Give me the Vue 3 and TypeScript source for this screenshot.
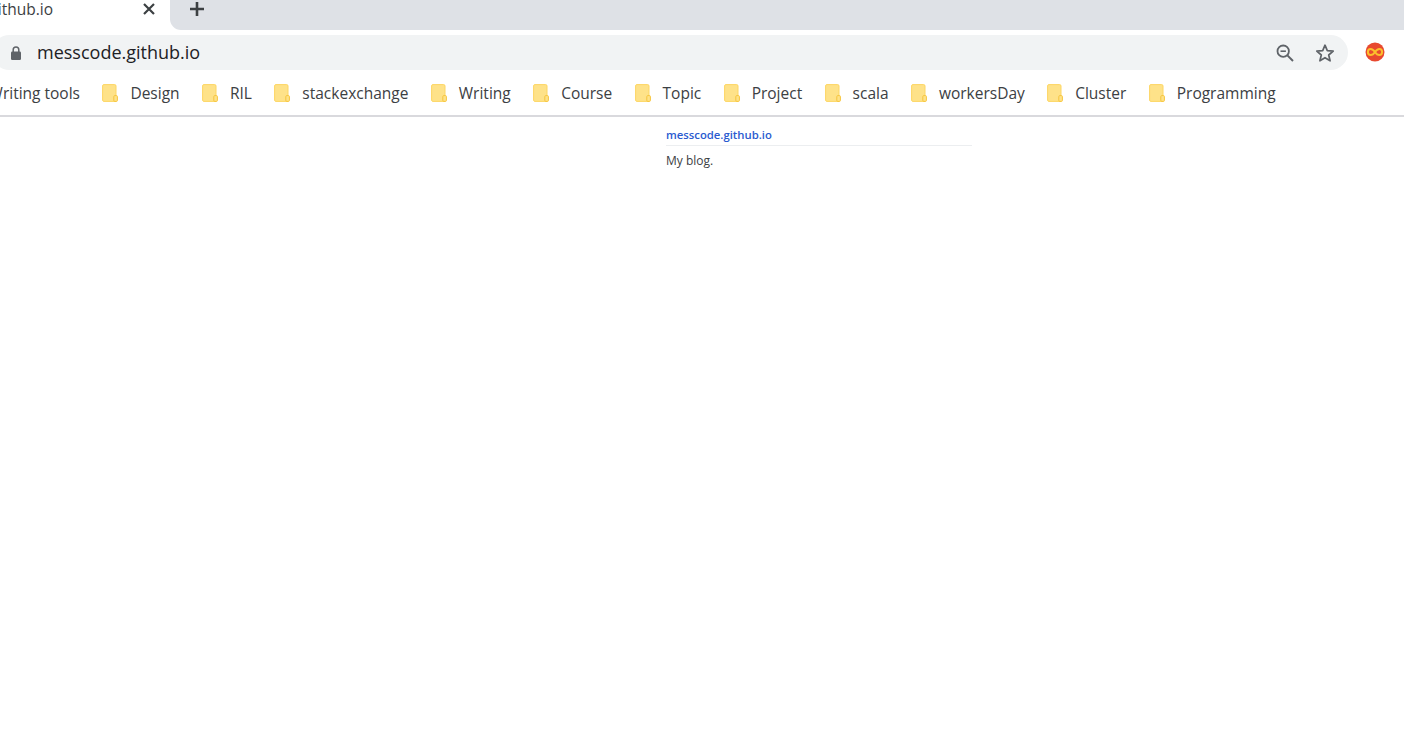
<script setup lang="ts">
const bookmarks: string[] = [
  'Design',
  'RIL',
  'stackexchange',
  'Writing',
  'Course',
  'Topic',
  'Project',
  'scala',
  'workersDay',
  'Cluster',
  'Programming',
]
</script>

<template>
  <div class="browser">
    <div class="tabstrip">
      <div class="tab">
        <div class="tab-title"><span>messcode.github.io</span></div>
        <svg class="tab-close" viewBox="0 0 12 12" width="12" height="12">
          <path d="M1 1 L11 11 M11 1 L1 11" stroke="#3c4043" stroke-width="2.2" fill="none" />
        </svg>
      </div>
      <div class="strip-rest">
        <svg class="new-tab" viewBox="0 0 16 16" width="16" height="16">
          <path d="M8 1 V15 M1 8 H15" stroke="#3c4043" stroke-width="2.6" fill="none" />
        </svg>
      </div>
    </div>

    <div class="toolbar">
      <div class="omnibox">
        <svg class="lock" viewBox="0 0 12 16" width="12" height="16">
          <path d="M3.2 7 V4.8 a2.8 2.8 0 0 1 5.6 0 V7" stroke="#5f6368" stroke-width="1.5" fill="none" />
          <rect x="1" y="6.5" width="10" height="8.5" rx="1.2" fill="#5f6368" />
        </svg>
        <span class="url">messcode.github.io</span>
        <svg class="zoom-icon" viewBox="0 0 18 18" width="18" height="18">
          <circle cx="7.2" cy="7.2" r="5.7" stroke="#5f6368" stroke-width="1.8" fill="none" />
          <path d="M4.5 7.2 H9.9" stroke="#5f6368" stroke-width="1.6" />
          <path d="M11.4 11.4 L17 17" stroke="#5f6368" stroke-width="2" />
        </svg>
        <svg class="star-icon" viewBox="0 0 20 20" width="20" height="20">
          <path
            d="M10 2.2 L12.3 7.6 L18.2 8.1 L13.7 12 L15.1 17.8 L10 14.7 L4.9 17.8 L6.3 12 L1.8 8.1 L7.7 7.6 Z"
            stroke="#5f6368"
            stroke-width="1.7"
            stroke-linejoin="round"
            fill="none"
          />
        </svg>
      </div>
      <svg class="extension" viewBox="0 0 20 20" width="20" height="20">
        <circle cx="10" cy="10" r="9.5" fill="#e8492f" />
        <path
          d="M10 10 C8.5 7.6 7 6.9 5.6 6.9 C3.8 6.9 2.9 8.4 2.9 10 C2.9 11.6 3.8 13.1 5.6 13.1 C7 13.1 8.5 12.4 10 10 C11.5 7.6 13 6.9 14.4 6.9 C16.2 6.9 17.1 8.4 17.1 10 C17.1 11.6 16.2 13.1 14.4 13.1 C13 13.1 11.5 12.4 10 10 Z"
          stroke="#fbc02d"
          stroke-width="2"
          fill="none"
        />
      </svg>
    </div>

    <div class="bookmarks">
      <span class="bm-clipped"><span>Writing tools</span></span>
      <div v-for="name in bookmarks" :key="name" class="bm">
        <svg class="folder" viewBox="0 0 16 18" width="16" height="18">
          <path
            d="M2 0.6 H12.6 Q14 0.6 14 2 V17.4 H2 Q0.6 17.4 0.6 16 V2 Q0.6 0.6 2 0.6 Z"
            fill="#fee289"
            stroke="#fdd663"
            stroke-width="1"
          />
          <rect x="11.8" y="11.6" width="3.6" height="5.8" rx="1" fill="#fee289" stroke="#f6c53d" stroke-width="1" />
        </svg>
        <span class="bm-name">{{ name }}</span>
      </div>
    </div>

    <main class="page">
      <div class="post">
        <h1 class="post-title">messcode.github.io</h1>
        <p class="post-body">My blog.</p>
      </div>
    </main>
  </div>
</template>

<style scoped>
.browser {
  width: 1404px;
  height: 748px;
  overflow: hidden;
  background: #fff;
  font-family: "Open Sans", "Noto Sans", sans-serif;
}

.tabstrip {
  display: flex;
  height: 30px;
  background: #fff;
}
.tab {
  width: 170px;
  flex: none;
  display: flex;
  align-items: center;
  padding-bottom: 12px;
  box-sizing: border-box;
}
.tab-title {
  width: 53px;
  overflow: hidden;
  display: flex;
  justify-content: flex-end;
  white-space: nowrap;
  font-size: 15.5px;
  color: #3c4043;
}
.tab-close {
  margin-left: 90px;
}
.strip-rest {
  flex: 1;
  background: #dee1e6;
  border-bottom-left-radius: 11px;
  display: flex;
  align-items: center;
  padding-left: 19px;
  padding-bottom: 12px;
}

.toolbar {
  height: 40px;
  display: flex;
  align-items: center;
  padding-top: 5px;
  box-sizing: border-box;
}
.omnibox {
  width: 1356px;
  margin-left: -8px;
  height: 35px;
  flex: none;
  border-radius: 18px;
  background: #f1f3f4;
  display: flex;
  align-items: center;
  box-sizing: border-box;
  padding-left: 18px;
}
.lock {
  flex: none;
}
.url {
  margin-left: 15px;
  margin-bottom: 2px;
  font-size: 18px;
  color: #202124;
}
.zoom-icon {
  margin-left: auto;
}
.star-icon {
  margin-left: 21px;
  margin-right: 13px;
}
.extension {
  margin-left: 17px;
  margin-bottom: 1px;
}

.bookmarks {
  height: 47px;
  display: flex;
  align-items: center;
  border-bottom: 2px solid #d9d9dd;
  box-sizing: border-box;
  padding-top: 1px;
  font-size: 15.5px;
  color: #3c4043;
}
.bm-clipped {
  width: 80px;
  flex: none;
  overflow: hidden;
  display: flex;
  justify-content: flex-end;
  white-space: nowrap;
  margin-right: 22.4px;
}
.bm {
  display: flex;
  align-items: center;
  flex: none;
  margin-right: 22.4px;
}
.folder {
  flex: none;
  margin-right: 12px;
}
.bm-name {
  white-space: nowrap;
}

.page {
  padding-left: 666px;
}
.post {
  width: 306px;
}
.post-title {
  margin: 0;
  padding: 10px 0 2px;
  font-size: 11.3px;
  line-height: 16px;
  font-weight: 600;
  color: #2a5bd0;
  border-bottom: 1px solid #eceef0;
}
.post-body {
  margin: 0;
  padding-top: 7px;
  font-size: 12px;
  line-height: 16px;
  color: #3c4043;
}
</style>
<style>
html,
body {
  margin: 0;
  background: #fff;
}
</style>
